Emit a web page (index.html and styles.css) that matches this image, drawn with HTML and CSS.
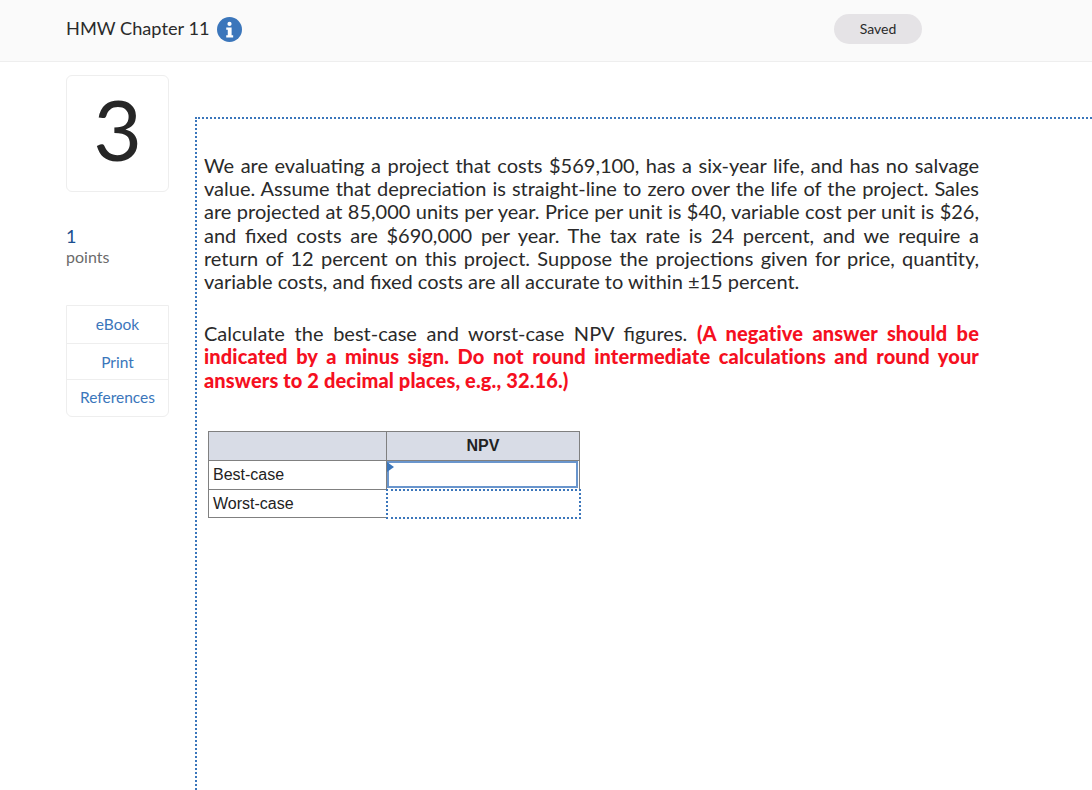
FILE: index.html
```html
<!DOCTYPE html>
<html lang="en">
<head>
    <meta charset="UTF-8">
    <title>HMW Chapter 11</title>
    <link rel="stylesheet" href="styles.css">
</head>
<body>
    <header class="top-bar">
        <div class="title-group">
            <span class="title">HMW Chapter 11</span>
            <svg class="info-icon" viewBox="0 0 26 26" width="25" height="25">
                <circle cx="13" cy="13" r="13" fill="#3b76bb"/>
                <circle cx="13" cy="7.2" r="2.2" fill="#fff"/>
                <path d="M9.6 11h5.6v8h1.6v2.2H9.6V19h1.6v-5.8H9.6z" fill="#fff"/>
            </svg>
        </div>
        <div class="saved-pill">Saved</div>
    </header>
    <div class="page">
        <aside class="sidebar">
            <div class="question-number">3</div>
            <div class="points">
                <div class="points-value">1</div>
                <div class="points-label">points</div>
            </div>
            <nav class="tools">
                <div class="tool-link tool-ebook">eBook</div>
                <div class="tool-link tool-print">Print</div>
                <div class="tool-link tool-refs">References</div>
            </nav>
        </aside>
        <main class="question">
            <p class="para">We are evaluating a project that costs $569,100, has a six-year life, and has no salvage value. Assume that depreciation is straight-line to zero over the life of the project. Sales are projected at 85,000 units per year. Price per unit is $40, variable cost per unit is $26, and fixed costs are $690,000 per year. The tax rate is 24 percent, and we require a return of 12 percent on this project. Suppose the projections given for price, quantity, variable costs, and fixed costs are all accurate to within ±15 percent.</p>
            <p class="para para-second">Calculate the best-case and worst-case NPV figures. <strong class="warn">(A negative answer should be indicated by a minus sign. Do not round intermediate calculations and round your answers to 2 decimal places, e.g., 32.16.)</strong></p>
            <table class="npv-table">
                <thead>
                    <tr>
                        <th class="col-label"></th>
                        <th class="col-value">NPV</th>
                    </tr>
                </thead>
                <tbody>
                    <tr>
                        <td>Best-case</td>
                        <td class="input-cell active-cell"><div class="cell-input"></div></td>
                    </tr>
                    <tr>
                        <td class="last-label">Worst-case</td>
                        <td class="input-cell dotted-cell"></td>
                    </tr>
                </tbody>
            </table>
        </main>
    </div>
</body>
</html>
```

FILE: styles.css
```css
html, body {
    margin: 0;
    height: 790px;
    overflow: hidden;
    background: #fff;
    font-family: "Lato", "Liberation Sans", sans-serif;
    color: #2a2a2a;
}

.top-bar {
    display: flex;
    align-items: center;
    box-sizing: border-box;
    height: 62px;
    padding: 0 0 3px 66px;
    background: #fafafa;
    border-bottom: 1px solid #eeeeee;
}

.title-group {
    display: flex;
    align-items: center;
    gap: 7px;
    width: 768px;
}

.title {
    margin-top: -2px;
    font-size: 18.2px;
    color: #2b2b2b;
}

.saved-pill {
    width: 88px;
    height: 30px;
    border-radius: 15px;
    background: #e5e3e6;
    font-size: 14px;
    line-height: 30px;
    text-align: center;
}

.page {
    display: flex;
    padding-left: 66px;
}

.sidebar {
    width: 103px;
    margin-right: 26px;
    padding-top: 13px;
    flex-shrink: 0;
}

.question-number {
    height: 115px;
    border: 1px solid #eeeeee;
    border-radius: 6px;
    font-size: 84px;
    line-height: 106px;
    text-align: center;
    color: #262626;
}

.points {
    margin-top: 34px;
}

.points-value {
    font-size: 18px;
    line-height: 20px;
    color: #1b4f8f;
}

.points-label {
    font-size: 16px;
    line-height: 22px;
    color: #6b6b6b;
}

.tools {
    margin-top: 37px;
    border: 1px solid #eeeeee;
    border-radius: 0 0 6px 6px;
}

.tool-link {
    font-size: 15.5px;
    text-align: center;
    color: #3b76bb;
}

.tool-ebook {
    height: 37px;
    line-height: 36px;
    border-bottom: 1px solid #eeeeee;
}

.tool-print {
    height: 35px;
    line-height: 36px;
    border-bottom: 1px solid #eeeeee;
}

.tool-refs {
    height: 36px;
    line-height: 35px;
}

.question {
    flex: 1;
    box-sizing: border-box;
    height: 673px;
    margin-top: 55px;
    padding: 35px 0 0 7px;
    border-top: 2px dotted #3b76bb;
    border-left: 2px dotted #3b76bb;
}

.para {
    width: 775px;
    margin: 0;
    font-size: 20px;
    line-height: 23.2px;
    text-align: justify;
    color: #2a2a2a;
}

.para-second {
    margin-top: 29px;
}

.warn {
    font-weight: 900;
    letter-spacing: 0.12px;
    color: #f5101f;
}

.npv-table {
    margin: 39px 0 0 4px;
    border-collapse: collapse;
    font-family: "Liberation Sans", Arial, sans-serif;
    font-size: 16px;
    color: #222;
}

.npv-table th,
.npv-table td {
    height: 28px;
    padding: 0 4px;
    border: 1px solid #808080;
}

.npv-table th {
    background: #d8dce6;
}

.npv-table .last-label {
    height: 26px;
}

.col-label {
    width: 169px;
}

.col-value {
    width: 184px;
}

.input-cell {
    position: relative;
}

.npv-table .active-cell {
    padding: 0;
}

.cell-input {
    box-sizing: border-box;
    height: 27px;
    margin: 0 1px 0 0;
    background: #fff;
    border: 2px solid #6a96cd;
}

.active-cell::before {
    content: "";
    position: absolute;
    left: 0;
    top: 1px;
    border-left: 7px solid #3b76bb;
    border-top: 5px solid transparent;
    border-bottom: 5px solid transparent;
}

.npv-table .dotted-cell {
    height: 26px;
    border: 2px dotted #3b76bb;
}
```
